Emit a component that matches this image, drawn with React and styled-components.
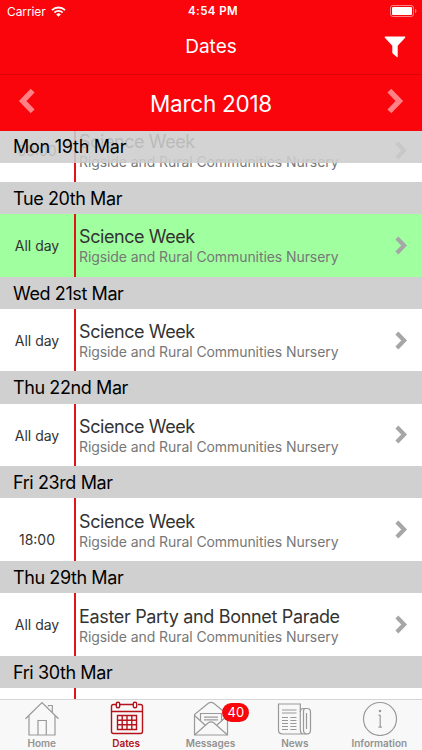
import React from "react";
import styled, { createGlobalStyle } from "styled-components";

const NURSERY = "Rigside and Rural Communities Nursery";

const days = [
  { date: "Tue 20th Mar", time: "All day", title: "Science Week", today: true },
  { date: "Wed 21st Mar", time: "All day", title: "Science Week" },
  { date: "Thu 22nd Mar", time: "All day", title: "Science Week" },
  { date: "Fri 23rd Mar", time: "18:00", title: "Science Week", low: true },
  { date: "Thu 29th Mar", time: "All day", title: "Easter Party and Bonnet Parade" },
  { date: "Fri 30th Mar", time: "", title: "" },
];

function Chevron({ left, width, height, color, stroke }) {
  return (
    <svg width={width} height={height} viewBox="0 0 16 24" fill="none">
      <path
        d={left ? "M13.2 2.500L4 12l9.200 9.500" : "M2.800 2.500L12 12l-9.200 9.500"}
        stroke={color}
        strokeWidth={stroke}
      />
    </svg>
  );
}

function WifiIcon() {
  return (
    <svg width="15" height="11" viewBox="0 0 15 11" fill="none">
      <path d="M1 4.2a9.2 9.2 0 0 1 13 0" stroke="#fff" strokeWidth="1.9" />
      <path d="M3.4 6.6a5.8 5.8 0 0 1 8.2 0" stroke="#fff" strokeWidth="1.8" />
      <path d="M7.5 10.7L5.2 8.4a3.3 3.3 0 0 1 4.6 0z" fill="#fff" />
    </svg>
  );
}

function BatteryIcon() {
  return (
    <svg width="27" height="12" viewBox="0 0 27 12" fill="none">
      <rect x="0.5" y="0.5" width="23" height="11" rx="2.4" stroke="#fff" strokeOpacity="0.5" />
      <rect x="2" y="2" width="20" height="8" rx="1" fill="#fff" />
      <path d="M25 4c1 .4 1.4 1.1 1.4 2s-.4 1.6-1.4 2z" fill="#fff" fillOpacity="0.5" />
    </svg>
  );
}

function FilterIcon() {
  return (
    <svg width="22" height="22" viewBox="0 0 22 22">
      <path d="M1 .5h20q.7.5.1 1.300L13.700 9.700V21q-.3.500-.9.100L8.700 17.500Q8.300 17 8.300 16.300V9.700L.9 1.800Q.3 1 1 .5z" fill="#fff" />
    </svg>
  );
}

function HomeIcon() {
  return (
    <svg width="36" height="36" viewBox="0 0 36 36" fill="none" stroke="#999" strokeWidth="1.2">
      <path d="M1.500 18.800L18 2.500l16.500 16.300" />
      <path d="M5 16v19h26V16" />
      <path d="M14 35V20.500h8.300V35" />
      <path d="M24.500 6.500V5.500h3.800v7" />
    </svg>
  );
}

function CalendarIcon() {
  return (
    <svg width="36" height="36" viewBox="0 0 36 36" fill="none" stroke="#b5121b" strokeWidth="1.4">
      <path d="M7 4.500H4.500A2 2 0 0 0 2.500 6.500v25a2 2 0 0 0 2 2h27a2 2 0 0 0 2-2v-25a2 2 0 0 0-2-2H29M11 4.500h13M2.500 11.500h31" />
      <rect x="7.3" y="2.2" width="3.4" height="5.6" rx="1.5" />
      <rect x="24.3" y="2.2" width="3.4" height="5.6" rx="1.5" />
      <path d="M8.500 15.500h19v14h-19zM8.500 20.200h19M8.500 24.800h19M13.200 15.500v14M18 15.500v14M22.800 15.500v14" />
    </svg>
  );
}

function MailIcon() {
  return (
    <svg width="36" height="36" viewBox="0 0 36 36" fill="none" stroke="#999" strokeWidth="1.2">
      <path d="M1.500 35V14.500L15.300 3.300q2.700-2 5.400 0L34.500 14.500V35z" />
      <path d="M1.500 35l13.800-12.200q2.700-2 5.400 0L34.500 35M1.500 15.500L12 25M34.500 15.500L24 25" />
      <path d="M7.500 20.500v-7h21v7M11 17.200h14M11 19.800h14" />
    </svg>
  );
}

function NewsIcon() {
  return (
    <svg width="36" height="36" viewBox="0 0 36 36" fill="none" stroke="#999" strokeWidth="1.2">
      <path d="M30 34H5.500q-4 0-4-4V4h21.800v25.500q0 4.500 3.500 4.500" />
      <path d="M23.300 12q0-3.500 3.200-3.500H30q3.500 0 3.500 3.500v18q0 4-3.500 4t-3.500-4V11.500q0-3 2-3" />
      <path d="M29.500 13v16M5 10h14.500M5 13h14.500M5 17.500h6M13.300 17.500h6.200M5 20.500h6M13.300 20.500h6.200M5 23.500h6M13.300 23.500h6.200M5 26.500h6M13.300 26.500h6.200M5 29.500h6M13.300 29.500h6.200" />
    </svg>
  );
}

function InfoIcon() {
  return (
    <svg width="36" height="36" viewBox="0 0 36 36" fill="none" stroke="#999" strokeWidth="1.2">
      <circle cx="18" cy="19" r="16.500" />
      <path d="M18.200 15v12.500M16.500 15.200h1.700M16.500 27.200h3.400" />
      <circle cx="18" cy="11" r=".7" fill="#999" />
    </svg>
  );
}

function EventRow({ time, title, today, low }) {
  return (
    <Row $today={today}>
      <Time $low={low}>{time}</Time>
      <Details>
        <Title $long={title.length > 20}>{title}</Title>
        <Place>{title && NURSERY}</Place>
      </Details>
      <Chevron width={14} height={19} color="#a6a6a6" stroke={5.2} />
    </Row>
  );
}

function App() {
  return (
    <>
      <GlobalStyle />
      <Screen>
        <StatusBar>
          <Carrier>
            Carrier <WifiIcon />
          </Carrier>
          <Clock>4:54 PM</Clock>
          <BatteryIcon />
        </StatusBar>
        <NavBar>
          <span />
          <NavTitle>Dates</NavTitle>
          <FilterIcon />
        </NavBar>
        <MonthBar>
          <Chevron left width={18} height={26} color="#ff8085" stroke={5} />
          <MonthTitle>March 2018</MonthTitle>
          <Chevron width={18} height={26} color="#ff8085" stroke={5} />
        </MonthBar>
        <List>
          <StickyDay>Mon 19th Mar</StickyDay>
          <Scroller>
            <EventRow time="09:00" title="Science Week" />
            {days.map((day) => (
              <React.Fragment key={day.date}>
                <DayHeader>{day.date}</DayHeader>
                <EventRow {...day} />
              </React.Fragment>
            ))}
          </Scroller>
        </List>
        <TabBar>
          <Tab>
            <HomeIcon />
            <TabLabel>Home</TabLabel>
          </Tab>
          <Tab $active>
            <CalendarIcon />
            <TabLabel>Dates</TabLabel>
          </Tab>
          <Tab>
            <MailIcon />
            <TabLabel>Messages</TabLabel>
            <Badge>40</Badge>
          </Tab>
          <Tab>
            <NewsIcon />
            <TabLabel>News</TabLabel>
          </Tab>
          <Tab>
            <InfoIcon />
            <TabLabel>Information</TabLabel>
          </Tab>
        </TabBar>
      </Screen>
    </>
  );
}

export default App;

const GlobalStyle = createGlobalStyle`
  body {
    margin: 0;
    font-family: Inter, "Liberation Sans", sans-serif;
  }
  * {
    box-sizing: border-box;
  }
`;

const Screen = styled.div`
  width: 422px;
  height: 750px;
  display: flex;
  flex-direction: column;
  overflow: hidden;
  background: #fff;
`;

const StatusBar = styled.div`
  height: 22px;
  flex-shrink: 0;
  display: grid;
  grid-template-columns: 1fr auto 1fr;
  align-items: center;
  padding: 0 6px 0 7px;
  background: #f9050b;
  color: #fff;
  font-size: 12px;
  > svg {
    justify-self: end;
    margin-right: -1px;
  }
`;

const Carrier = styled.div`
  display: flex;
  align-items: center;
  gap: 5px;
  letter-spacing: -0.1px;
`;

const Clock = styled.div`
  padding-left: 3px;
  font-size: 11.5px;
  font-weight: 600;
  letter-spacing: 0.4px;
`;

const NavBar = styled.div`
  height: 53px;
  flex-shrink: 0;
  display: grid;
  grid-template-columns: 1fr auto 1fr;
  align-items: center;
  padding: 0 16px 3px;
  background: #f9050b;
  border-bottom: 1px solid #d80409;
  > svg {
    justify-self: end;
  }
`;

const NavTitle = styled.div`
  color: #fff;
  font-size: 19px;
`;

const MonthBar = styled.div`
  height: 56px;
  flex-shrink: 0;
  display: flex;
  align-items: center;
  justify-content: space-between;
  padding: 0 18px 4px;
  background: #f9050b;
`;

const MonthTitle = styled.div`
  color: #fff;
  font-size: 22.5px;
  letter-spacing: -0.25px;
  padding-top: 4px;
`;

const List = styled.div`
  position: relative;
  flex: 1;
  min-height: 0;
  overflow: hidden;
`;

const Scroller = styled.div`
  margin-top: -12px;
`;

const DayHeader = styled.div`
  height: 32.2px;
  padding-left: 13px;
  line-height: 33px;
  background: #d0d0d0;
  color: #000;
  font-size: 18px;
  letter-spacing: -0.4px;
`;

const StickyDay = styled(DayHeader)`
  position: absolute;
  top: 0;
  left: 0;
  right: 0;
  line-height: 32px;
  letter-spacing: -0.25px;
  background: rgba(205, 205, 205, 0.88);
`;

const Row = styled.div`
  height: 62.66px;
  display: flex;
  align-items: center;
  padding-right: 14.5px;
  background: ${(props) => (props.$today ? "#a0ff9f" : "#fff")};
`;

const Time = styled.div`
  width: 76px;
  align-self: stretch;
  flex-shrink: 0;
  padding-top: ${(props) => (props.$low ? "32.500px" : "23px")};
  border-right: 2px solid #e0141b;
  text-align: center;
  line-height: 18px;
  color: #333;
  font-size: 14px;
`;

const Details = styled.div`
  flex: 1;
  padding: 2px 0 0 3px;
  white-space: nowrap;
`;

const Title = styled.div`
  color: #333;
  font-size: 18px;
  line-height: 22px;
  letter-spacing: ${(props) => (props.$long ? "-0.33px" : "-0.42px")};
`;

const Place = styled.div`
  color: #777;
  font-size: 14px;
  line-height: 18px;
  letter-spacing: -0.08px;
`;

const TabBar = styled.div`
  height: 51px;
  flex-shrink: 0;
  display: grid;
  grid-template-columns: repeat(5, 1fr);
  border-top: 1px solid #d6d6d6;
  background: #f8f8f8;
`;

const Tab = styled.div`
  position: relative;
  display: flex;
  flex-direction: column;
  align-items: center;
  color: ${(props) => (props.$active ? "#b5121b" : "#929292")};
`;

const TabLabel = styled.div`
  padding-right: 1px;
  font-size: 10px;
  font-weight: 600;
  line-height: 14px;
`;

const Badge = styled.div`
  position: absolute;
  top: 3px;
  left: 53.5px;
  width: 27px;
  height: 19px;
  border-radius: 10px;
  background: #f9050b;
  color: #fff;
  font-size: 13px;
  font-weight: 400;
  line-height: 19px;
  text-align: center;
`;
